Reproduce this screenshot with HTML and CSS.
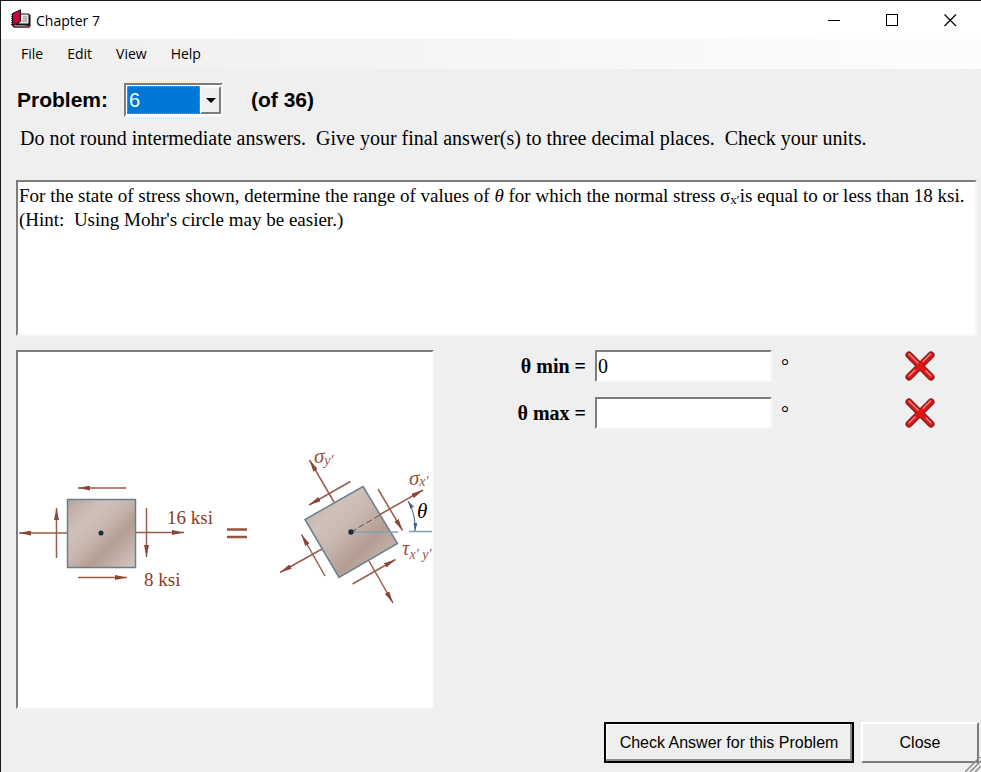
FILE: index.html
```
<!DOCTYPE html>
<html lang="en">
<head>
    <meta charset="UTF-8">
    <meta name="viewport" content="width=device-width, initial-scale=1.0">
    <title>Chapter 7</title>
    <link rel="stylesheet" href="styles.css">
</head>
<body>
    <header class="title-bar">
        <svg class="app-icon" width="20" height="20" viewBox="0 0 20 20" aria-hidden="true">
            <path d="M2 16.500 L12 16.500 L19.500 17 V6 L17.500 4.500 H10 V13 Z" fill="#111"/>
            <path d="M10 5.500 H17.500 V14.500 H8 Z" fill="#e8e8e8"/>
            <path d="M12 8 H16 M12 10 H16 M11 12 H16" stroke="#888" stroke-width="1"/>
            <path d="M1 15 L3 18 H18 L19 16" fill="none" stroke="#5c1020" stroke-width="1.500"/>
            <path d="M1.500 4.500 L9.500 .8 V12.500 L1.500 16.500 Z" fill="#c8003c" stroke="#22060c"/>
            <path d="M1 5 V17" stroke="#111" stroke-width="1.500" stroke-dasharray="1 1"/>
        </svg>
        <h1>Chapter 7</h1>
        <div class="window-buttons">
            <button type="button" aria-label="Minimize">
                <svg width="13" height="13" viewBox="0 0 13 13"><path d="M0 6.500 H12" stroke="#000"/></svg>
            </button>
            <button type="button" aria-label="Maximize">
                <svg width="13" height="13" viewBox="0 0 13 13"><rect x=".5" y=".5" width="11" height="11" fill="none" stroke="#000"/></svg>
            </button>
            <button type="button" aria-label="Close window">
                <svg width="13" height="13" viewBox="0 0 13 13"><path d="M.5 .5 L12 12 M12 .5 L.5 12" stroke="#000" stroke-width="1.200"/></svg>
            </button>
        </div>
    </header>

    <nav class="menu-bar">
        <button type="button">File</button>
        <button type="button">Edit</button>
        <button type="button">View</button>
        <button type="button">Help</button>
    </nav>

    <main>
        <div class="problem-row">
            <label for="problem">Problem:</label>
            <div class="combo">
                <select id="problem">
                    <option>5</option>
                    <option selected>6</option>
                    <option>7</option>
                </select>
                <span class="combo-arrow"></span>
            </div>
            <span>(of 36)</span>
        </div>
        <p class="instructions">Do not round intermediate answers.&nbsp; Give your final answer(s) to three decimal places.&nbsp; Check your units.</p>

        <div class="question sunken">
            For the state of stress shown, determine the range of values of <i>θ</i> for which the normal stress σ<sub>x′</sub>is equal to or less than 18 ksi.<br>
            (Hint:&nbsp; Using Mohr's circle may be easier.)
        </div>

        <div class="work-area">
            <div class="figure sunken">
                <svg viewBox="18 352 414 355" role="img" aria-label="Stress element and rotated stress element">
                    <defs>
                        <marker id="arrow" viewBox="0 0 12 5" refX="12" refY="2.500" markerWidth="12" markerHeight="5" markerUnits="userSpaceOnUse" orient="auto-start-reverse">
                            <path d="M0 0 L12 2.500 L0 5 Z" fill="#8a4636"/>
                        </marker>
                        <marker id="arrow-blue" viewBox="0 0 8 4" refX="8" refY="2" markerWidth="8" markerHeight="4" markerUnits="userSpaceOnUse" orient="auto-start-reverse">
                            <path d="M0 0 L8 2 L0 4 Z" fill="#3f6184"/>
                        </marker>
                        <linearGradient id="metal" x1="0" y1="0" x2="1" y2="1">
                            <stop offset="0" stop-color="#b7a49c"/>
                            <stop offset=".28" stop-color="#cfc1ba"/>
                            <stop offset=".45" stop-color="#c9b8b0"/>
                            <stop offset=".65" stop-color="#b49d93"/>
                            <stop offset="1" stop-color="#d3c8c3"/>
                        </linearGradient>
                    </defs>

                    <!-- element in the x-y axes -->
                    <rect x="67.500" y="499.500" width="68" height="68" class="block"/>
                    <circle cx="101" cy="533" r="2.500" class="dot"/>
                    <g class="force">
                        <path d="M67 533 H19"/>
                        <path d="M136 532.500 H184"/>
                        <path d="M126 488 H78"/>
                        <path d="M78 577.500 H127"/>
                        <path d="M56.500 558 V508"/>
                        <path d="M146.500 508 V557"/>
                    </g>
                    <text x="167" y="524" class="value">16 ksi</text>
                    <text x="144" y="586" class="value">8 ksi</text>
                    <path d="M227 529.500 H247 M227 537 H247" class="equals"/>

                    <!-- element turned by theta -->
                    <path d="M363 486.500 L397.500 543.500 L339 577.500 L305 519.500 Z" class="block"/>
                    <path d="M351 532 H398 M409 531.500 H432" class="axis"/>
                    <path d="M351 532 L380 515" class="dashes"/>
                    <circle cx="351" cy="532" r="2.700" class="dot"/>
                    <g class="force">
                        <path d="M380 514.500 L423 490"/>
                        <path d="M322 549 L280 572.500"/>
                        <path d="M334 502 L309.500 460"/>
                        <path d="M369 561 L393 603"/>
                        <path d="M350.500 481.500 L309 505"/>
                        <path d="M378 489 L402.500 530.500"/>
                        <path d="M352.500 584 L395.500 559.500"/>
                        <path d="M325 576 L301.500 534.500"/>
                    </g>
                    <path d="M408 501 Q416 514 415 531" class="angle"/>
                    <text x="314" y="463" class="symbol">σ<tspan class="index" dy="2">y′</tspan></text>
                    <text x="409" y="485" class="symbol">σ<tspan class="index" dy="1">x′</tspan></text>
                    <text x="402" y="555" class="symbol">τ<tspan class="index" dy="4">x′ y′</tspan></text>
                    <text x="417" y="518" class="theta">θ</text>
                </svg>
            </div>

            <div class="answers">
                <label for="theta-min">θ min =</label>
                <input type="text" id="theta-min" value="0">
                <span class="unit">°</span>
                <svg class="wrong" width="34" height="34" viewBox="0 0 34 34" role="img" aria-label="Incorrect">
                    <path d="M6 6 L28 28 M28 6 L6 28" class="wrong-edge"/>
                    <path d="M6 6 L28 28 M28 6 L6 28" class="wrong-fill"/>
                    <path d="M6 5 L15 14 M27.500 5 L20 12.500 M6 27 L12 21 M23 22 L28 27" class="wrong-shine"/>
                </svg>

                <label for="theta-max">θ max =</label>
                <input type="text" id="theta-max" value="">
                <span class="unit">°</span>
                <svg class="wrong" width="34" height="34" viewBox="0 0 34 34" role="img" aria-label="Incorrect">
                    <path d="M6 6 L28 28 M28 6 L6 28" class="wrong-edge"/>
                    <path d="M6 6 L28 28 M28 6 L6 28" class="wrong-fill"/>
                    <path d="M6 5 L15 14 M27.500 5 L20 12.500 M6 27 L12 21 M23 22 L28 27" class="wrong-shine"/>
                </svg>
            </div>
        </div>
    </main>

    <footer class="actions">
        <button type="button" class="action default">Check Answer for this Problem</button>
        <button type="button" class="action">Close</button>
    </footer>
    <svg class="grip" width="16" height="15" viewBox="0 0 16 15" aria-hidden="true">
        <path d="M0 15 L16 -1 M5 15 L16 4 M10 15 L16 9" stroke="#8c8c8c" stroke-width="1.500"/>
    </svg>
</body>
</html>
```
FILE: styles.css
```
* {
    box-sizing: border-box;
}
body {
    margin: 0;
    min-height: 100vh;
    display: flex;
    flex-direction: column;
    position: relative;
    background: #efefef;
    color: #000;
    border-top: 1px solid #1a1a1a;
    border-left: 1px solid #1a1a1a;
    font-family: "Liberation Serif", serif;
    font-size: 20px;
}
button {
    border: none;
    background: none;
    padding: 0;
    color: inherit;
}

/* title bar and menu */
.title-bar {
    display: flex;
    align-items: center;
    height: 38px;
    padding-left: 10px;
    background: #fff;
}
.title-bar h1 {
    flex: 1;
    margin: 0 0 0 5px;
    font: 14px "Open Sans", sans-serif;
}
.app-icon {
    margin-bottom: 2px;
}
.window-buttons {
    display: flex;
    padding-right: 2px;
}
.window-buttons button {
    display: flex;
    align-items: center;
    justify-content: center;
    width: 58px;
    height: 38px;
}
.menu-bar {
    display: flex;
    align-items: center;
    gap: 24px;
    height: 30px;
    padding: 0 0 2px 20px;
    background: linear-gradient(to right, #efefef, #fdfdfd);
}
.menu-bar button {
    font: 14px "Open Sans", sans-serif;
}

main {
    flex: 1;
    display: flex;
    flex-direction: column;
    padding: 14px 4px 0 15px;
}
.sunken,
.combo,
.answers input {
    background: #fff;
    border: 2px solid;
    border-color: #7d7d7d #f8f8f8 #f8f8f8 #7d7d7d;
}

/* problem picker */
.problem-row {
    display: flex;
    align-items: center;
    padding-left: 1px;
    font: bold 21px "Liberation Sans", sans-serif;
}
.combo {
    display: flex;
    width: 99px;
    height: 34px;
    margin: 0 28px 0 16px;
    padding: 1px 0;
}
.combo select {
    appearance: none;
    flex: 1;
    min-width: 0;
    margin-left: 1px;
    padding: 0 1px;
    border: 1px dotted #d98328;
    border-radius: 0;
    background: #0078d7;
    color: #fff;
    font: 20px "Liberation Sans", sans-serif;
}
.combo-arrow {
    display: flex;
    align-items: center;
    justify-content: center;
    width: 21px;
    border: 2px solid;
    border-color: #f8f8f8 #7d7d7d #7d7d7d #f8f8f8;
    background: #efefef;
}
.combo-arrow::before {
    content: "";
    border: 5px solid transparent;
    border-top-color: #000;
    border-bottom: none;
}
.instructions {
    margin: 9px 0 30px 4px;
    line-height: 24px;
}

.question {
    height: 156px;
    padding: 2px 1px;
    font-size: 19px;
    line-height: 24px;
}
.question sub {
    font-size: 13px;
    line-height: 1;
    vertical-align: -2px;
}

/* drawing */
.work-area {
    display: flex;
    margin-top: 14px;
}
.figure {
    flex: 0 1 418px;
}
.figure svg {
    display: block;
    width: 100%;
}
.block {
    fill: url(#metal);
    stroke: #68808e;
    stroke-width: 1.5px;
}
.dot {
    fill: #1d2c3a;
}
.force path {
    fill: none;
    stroke: #9a5c4c;
    stroke-width: 1.5px;
    marker-end: url(#arrow);
}
.value {
    fill: #8a3a24;
    font-size: 19px;
}
.equals {
    stroke: #96543f;
    stroke-width: 2.5px;
}
.axis {
    stroke: #7fa3b8;
    stroke-width: 1.5px;
}
.dashes {
    stroke: #555;
    stroke-dasharray: 6 3;
}
.angle {
    fill: none;
    stroke: #3f6184;
    marker-start: url(#arrow-blue);
    marker-end: url(#arrow-blue);
}
.symbol {
    fill: #96543f;
    font-size: 21px;
    font-style: italic;
}
.index {
    font-size: 14px;
}
.theta {
    font-size: 21px;
    font-style: italic;
}

/* answers */
.answers {
    flex: 1;
    display: grid;
    grid-template-columns: 151px 177px 1fr 34px;
    grid-auto-rows: 32px;
    column-gap: 9px;
    row-gap: 15px;
    align-content: start;
    align-items: center;
    padding: 0 40px 0 1px;
}
.answers label {
    text-align: right;
    font-weight: bold;
}
.answers input {
    width: 100%;
    height: 32px;
    padding: 0 1px;
    border-radius: 0;
    font: 20px "Liberation Serif", serif;
}

/* bottom buttons */
.actions {
    display: flex;
    justify-content: flex-end;
    gap: 7px;
    padding: 13px 2px 9px 0;
}
.action {
    width: 118px;
    height: 41px;
    border: 2px solid;
    border-color: #fff #7d7d7d #7d7d7d #fff;
    background: #efefef;
    font: 16px "Liberation Sans", sans-serif;
}
.action.default {
    width: 250px;
    border-color: #000;
    box-shadow: inset -2px -2px #8c8c8c, inset 1px 1px #fff;
}
.grip {
    position: absolute;
    right: 0;
    bottom: 0;
}
.wrong-edge {
    stroke: #6d2424;
    stroke-width: 7px;
    stroke-linecap: round;
}
.wrong-fill {
    stroke: #e01212;
    stroke-width: 5px;
    stroke-linecap: round;
}
.wrong-shine {
    stroke: #f08080;
    stroke-width: 1.5px;
    stroke-linecap: round;
}
```
